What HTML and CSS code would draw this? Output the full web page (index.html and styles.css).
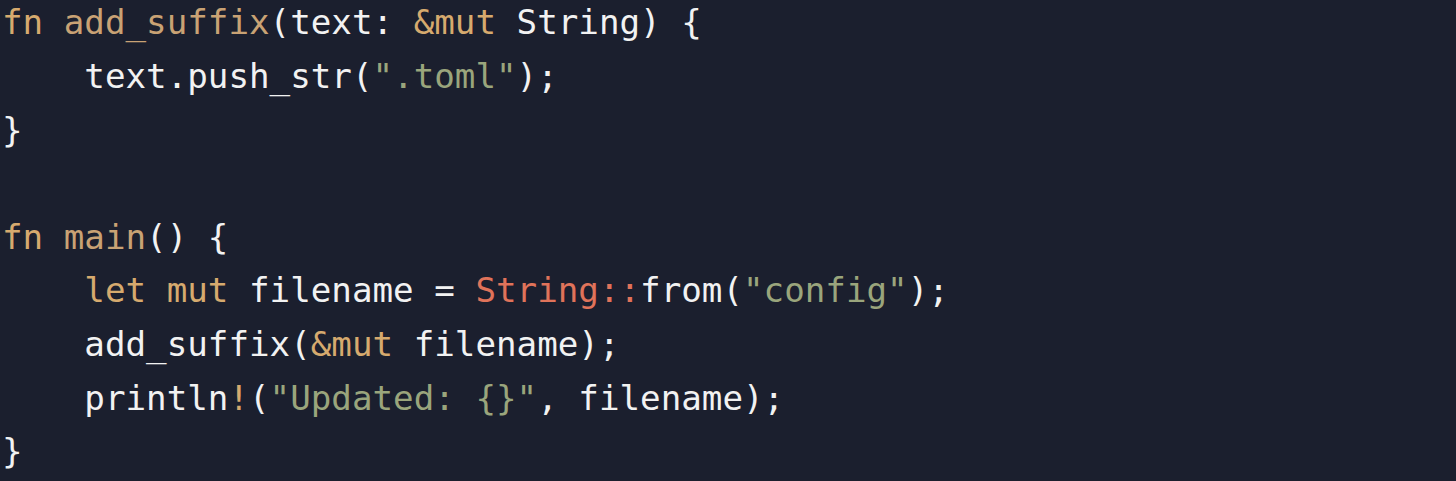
FILE: index.html
```html
<!DOCTYPE html>
<html>
<head>
<meta charset="utf-8">
<link rel="stylesheet" href="styles.css">
</head>
<body>
<pre class="code"><code><span class="kw">fn</span> <span class="fnname">add_suffix</span>(text: <span class="kw">&amp;mut</span> String) {
    text.push_str(<span class="str">".toml"</span>);
}

<span class="kw">fn</span> <span class="fnname">main</span>() {
    <span class="kw">let</span> <span class="kw">mut</span> filename = <span class="type">String::</span>from(<span class="str">"config"</span>);
    add_suffix(<span class="kw">&amp;mut</span> filename);
    println<span class="kw">!</span>(<span class="str">"Updated: {}"</span>, filename);
}</code></pre>
</body>
</html>
```

FILE: styles.css
```css
html, body {
  margin: 0;
  padding: 0;
  background: #1b1f2e;
  height: 100%;
  overflow: hidden;
}

.code {
  margin: -3.6px 0 0 0;
  padding: 0 0 0 2px;
  font-family: "DejaVu Sans Mono", "Liberation Mono", monospace;
  font-size: 34.2px;
  line-height: 53.6px;
  color: #f2f2f2;
  white-space: pre;
}

.kw { color: #d6aa6e; }
.fnname { color: #c9a274; }
.str { color: #9aa57c; }
.type { color: #e0735a; }
```
